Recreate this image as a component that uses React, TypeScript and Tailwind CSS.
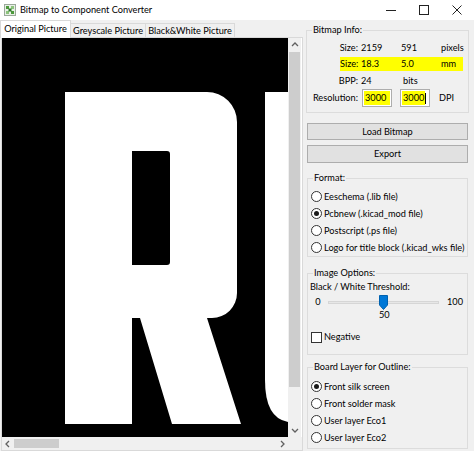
import React from "react";

function Chevron({ dir }: { dir: "up" | "down" | "left" | "right" }) {
  const pts: Record<string, string> = {
    up: "1,5 4,2 7,5",
    down: "1,2 4,5 7,2",
    left: "5,1 2,4 5,7",
    right: "2,1 5,4 2,7",
  };
  return (
    <svg width="8" height="8" viewBox="0 0 8 8">
      <polyline points={pts[dir]} fill="none" stroke="#606060" strokeWidth="1.3" />
    </svg>
  );
}

function Radio({ checked, label }: { checked?: boolean; label: string }) {
  return (
    <div className="flex items-center h-[17px] pl-[3px]">
      <span className="w-[11px] h-[11px] rounded-full border border-[#333] bg-white flex items-center justify-center shrink-0">
        {checked && <span className="w-[5px] h-[5px] rounded-full bg-[#1a1a1a]" />}
      </span>
      <span className="ml-[2px] whitespace-nowrap">{label}</span>
    </div>
  );
}

function Legend({ children }: { children: React.ReactNode }) {
  return <legend className="ml-[5px] px-[1px] leading-[12px] h-[12px] whitespace-nowrap">{children}</legend>;
}

export default function App() {
  return (
    <div className="w-[474px] h-[451px] overflow-hidden bg-[#f0f0f0] text-black text-[9.2px] font-['Lato',sans-serif] flex flex-col">
      {/* Title bar */}
      <div className="h-[20px] bg-white flex items-center shrink-0">
        <svg className="ml-[4px]" width="12" height="12" viewBox="0 0 12 12">
          <rect x="0.5" y="0.5" width="11" height="11" fill="#e8efe6" stroke="#9aa99a" />
          <rect x="2" y="2" width="3" height="3" fill="#4c9a3c" />
          <rect x="7" y="2" width="3" height="3" fill="#8cc47c" />
          <rect x="2" y="7" width="3" height="3" fill="#8cc47c" />
          <rect x="7" y="7" width="3" height="3" fill="#4c9a3c" />
          <rect x="4.5" y="4.5" width="3" height="3" fill="#2f7a2a" />
        </svg>
        <span className="ml-[4px] text-[9.2px] whitespace-nowrap">Bitmap to Component Converter</span>
        <div className="ml-auto flex items-center h-full">
          <div className="w-[33px] h-full flex items-center justify-center">
            <svg width="10" height="10" viewBox="0 0 10 10">
              <line x1="0" y1="5.5" x2="10" y2="5.5" stroke="#222" strokeWidth="1" />
            </svg>
          </div>
          <div className="w-[33px] h-full flex items-center justify-center">
            <svg width="10" height="10" viewBox="0 0 10 10">
              <rect x="0.5" y="0.5" width="9" height="9" fill="none" stroke="#222" strokeWidth="1" />
            </svg>
          </div>
          <div className="w-[34px] h-full flex items-center justify-center">
            <svg width="10" height="10" viewBox="0 0 10 10">
              <line x1="0.5" y1="0.5" x2="9.5" y2="9.5" stroke="#222" strokeWidth="1" />
              <line x1="9.5" y1="0.5" x2="0.5" y2="9.5" stroke="#222" strokeWidth="1" />
            </svg>
          </div>
        </div>
      </div>

      <div className="flex flex-1 min-h-0">
        {/* Left: notebook */}
        <div className="w-[303px] flex flex-col shrink-0">
          <div className="h-[17px] flex items-end shrink-0 whitespace-nowrap">
            <div className="relative z-10 h-[18px] -mb-[1px] w-[71px] bg-white border border-b-0 border-[#d9d9d9] flex items-center justify-center">
              <span className="-mt-[1px]">Original Picture</span>
            </div>
            <div className="h-[14px] w-[75px] bg-[#f0f0f0] border border-l-0 border-b-0 border-[#d9d9d9] flex items-center justify-center">
              Greyscale Picture
            </div>
            <div className="h-[14px] w-[89px] bg-[#f0f0f0] border border-l-0 border-b-0 border-[#d9d9d9] flex items-center justify-center">
              Black&amp;White Picture
            </div>
          </div>
          <div className="ml-[1px] w-[302px] flex-1 border border-[#d9d9d9] bg-white flex flex-col">
            <div className="flex h-[399px]">
              <svg width="286" height="399" viewBox="0 0 286 399" className="block">
                <rect x="0" y="0" width="286" height="399" fill="#000" />
                <path
                  fillRule="evenodd"
                  fill="#fff"
                  d="M63,54 H205 A30,30 0 0 1 235,84 V255 A25,25 0 0 1 210,280 H205 L239,386 H170 L138,280 H130 V386 H63 Z M130,113 H165 Q168,113 168,116 V224 Q168,227 165,227 H130 Z"
                />
                <path fill="#fff" d="M263,54 H286 V384 Q263,380 263,342 Z" />
              </svg>
              <div className="w-[13px] bg-[#f0f0f0] flex flex-col">
                <div className="h-[13px] flex items-center justify-center">
                  <Chevron dir="up" />
                </div>
                <div className="mt-[1px] mx-[1px] h-[335px] bg-[#cdcdcd]" />
                <div className="flex-1" />
                <div className="h-[13px] flex items-center justify-center">
                  <Chevron dir="down" />
                </div>
              </div>
            </div>
            <div className="flex h-[13px] bg-[#f0f0f0]">
              <div className="w-[12px] flex items-center justify-center">
                <Chevron dir="left" />
              </div>
              <div className="w-[45px] my-[2px] bg-[#cdcdcd]" />
              <div className="flex-1" />
              <div className="w-[13px] flex items-center justify-center">
                <Chevron dir="right" />
              </div>
              <div className="w-[13px] bg-[#f0f0f0]" />
            </div>
          </div>
        </div>

        {/* Right panel */}
        <div className="flex-1 pl-[4px] pr-[5px] flex flex-col">
          {/* Bitmap Info */}
          <fieldset className="mt-[4px] border border-[#dcdcdc] -ml-[1px]">
            <Legend>Bitmap Info:</Legend>
            <div className="pt-[5px] pb-[5px]">
              <div className="flex items-center h-[14px]">
                <span className="w-[51px] text-right">Size:</span>
                <span className="ml-[3px] w-[40px]">2159</span>
                <span className="w-[39px]">591</span>
                <span className="ml-[1px]">pixels</span>
              </div>
              <div className="mt-[2px] ml-[33px] w-[123px] h-[14px] bg-[#ffff00] flex items-center">
                <span className="w-[18px] text-right">Size:</span>
                <span className="ml-[3px] w-[40px]">18.3</span>
                <span className="w-[39px]">5.0</span>
                <span className="ml-[1px]">mm</span>
              </div>
              <div className="mt-[3px] flex items-center h-[14px]">
                <span className="w-[51px] text-right">BPP:</span>
                <span className="ml-[3px] w-[42px]">24</span>
                <span>bits</span>
              </div>
              <div className="mt-[1px] flex items-center h-[18px]">
                <span className="w-[51px] text-right">Resolution:</span>
                <div className="ml-[4px] w-[30px] h-[18px] border border-[#adadad] bg-white flex items-center px-[1px]">
                  <span className="bg-[#ffff00] w-full h-[14px] flex items-center pl-[1px]">3000</span>
                </div>
                <div className="ml-[8px] w-[30px] h-[18px] border border-[#adadad] bg-white flex items-center px-[1px]">
                  <span className="bg-[#ffff00] h-[14px] flex items-center pl-[1px] pr-[1px]">3000</span>
                  <span className="w-[1px] h-[11px] bg-black" />
                </div>
                <span className="ml-[9px]">DPI</span>
              </div>
            </div>
          </fieldset>

          {/* Buttons */}
          <button className="mt-[10px] h-[17px] w-[161px] bg-[#e1e1e1] border border-[#adadad] flex items-center justify-center">
            Load Bitmap
          </button>
          <button className="mt-[5px] h-[18px] w-[161px] bg-[#e1e1e1] border border-[#adadad] flex items-center justify-center">
            Export
          </button>

          {/* Format */}
          <fieldset className="mt-[9px] border border-[#dcdcdc] w-[161px]">
            <Legend>Format:</Legend>
            <div className="pt-[4px]">
              <Radio label="Eeschema (.lib file)" />
              <Radio checked label="Pcbnew (.kicad_mod file)" />
              <Radio label="Postscript (.ps file)" />
              <Radio label="Logo for title block (.kicad_wks file)" />
            </div>
          </fieldset>

          {/* Image Options */}
          <fieldset className="mt-[10px] border border-[#dcdcdc] w-[161px]">
            <Legend>Image Options:</Legend>
            <div className="pt-[2px] pb-[10px]">
              <div className="h-[12px] flex items-center pl-[2px] whitespace-nowrap">Black / White Threshold:</div>
              <div className="mt-[2px] h-[14px] flex items-center">
                <span className="w-[20px] text-center">0</span>
                <div className="w-[111px] relative h-[14px] flex items-center">
                  <div className="w-full h-[3px] bg-[#e7e7e7] border border-[#d6d6d6]" />
                  <svg className="absolute left-[51px] top-0" width="9" height="15" viewBox="0 0 9 15">
                    <path d="M0.5,0.5 H8.5 V10 L4.5,14.5 L0.5,10 Z" fill="#0078d7" stroke="#0062b0" strokeWidth="1" />
                  </svg>
                </div>
                <span className="ml-[8px]">100</span>
              </div>
              <div className="h-[12px] flex items-center pl-[71px]">50</div>
              <div className="mt-[9px] h-[14px] flex items-center pl-[3px]">
                <span className="w-[11px] h-[11px] border border-[#333] bg-white" />
                <span className="ml-[2px]">Negative</span>
              </div>
            </div>
          </fieldset>

          {/* Board Layer */}
          <fieldset className="mt-[6px] border border-[#dcdcdc] w-[161px]">
            <Legend>Board Layer for Outline:</Legend>
            <div className="pt-[5px] pb-[2px]">
              <Radio checked label="Front silk screen" />
              <Radio label="Front solder mask" />
              <Radio label="User layer Eco1" />
              <Radio label="User layer Eco2" />
            </div>
          </fieldset>
        </div>
      </div>
    </div>
  );
}
